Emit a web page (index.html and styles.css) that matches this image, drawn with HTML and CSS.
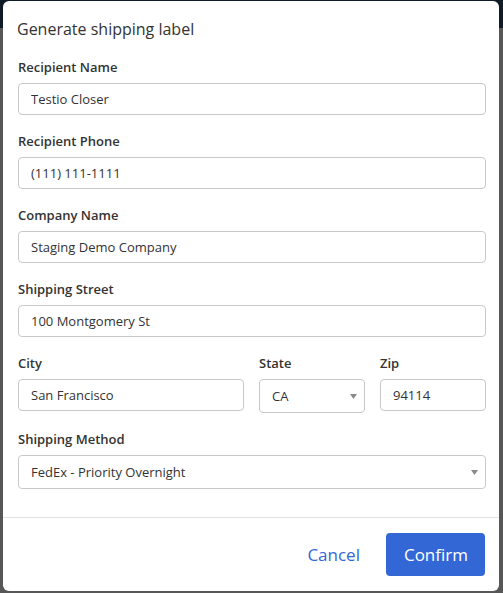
FILE: index.html
```html
<!DOCTYPE html>
<html lang="en">
<head>
<meta charset="utf-8">
<title>Generate shipping label</title>
<link rel="stylesheet" href="styles.css">
</head>
<body>
<div class="modal">
  <div class="modal-body">
    <h1 class="modal-title">Generate shipping label</h1>
    <div class="field">
      <label class="label">Recipient Name</label>
      <input class="input" type="text" value="Testio Closer">
    </div>
    <div class="field">
      <label class="label">Recipient Phone</label>
      <input class="input" type="text" value="(111) 111-1111">
    </div>
    <div class="field">
      <label class="label">Company Name</label>
      <input class="input" type="text" value="Staging Demo Company">
    </div>
    <div class="field">
      <label class="label">Shipping Street</label>
      <input class="input" type="text" value="100 Montgomery St">
    </div>
    <div class="field-row">
      <div class="field">
        <label class="label">City</label>
        <input class="input" type="text" value="San Francisco">
      </div>
      <div class="field">
        <label class="label">State</label>
        <div class="select-wrap">
          <select class="select"><option>CA</option></select>
          <svg class="caret" width="7" height="5" viewBox="0 0 7 5"><path d="M0 0h7L3.5 5z" fill="#8a8a8a"/></svg>
        </div>
      </div>
      <div class="field">
        <label class="label">Zip</label>
        <input class="input" type="text" value="94114">
      </div>
    </div>
    <div class="field">
      <label class="label">Shipping Method</label>
      <div class="select-wrap">
        <select class="select"><option>FedEx - Priority Overnight</option></select>
        <svg class="caret" width="7" height="5" viewBox="0 0 7 5"><path d="M0 0h7L3.5 5z" fill="#8a8a8a"/></svg>
      </div>
    </div>
  </div>
  <div class="modal-footer">
    <button class="btn-link" type="button">Cancel</button>
    <button class="btn-primary" type="button">Confirm</button>
  </div>
</div>
</body>
</html>
```
FILE: styles.css
```css
html, body {
  margin: 0;
  padding: 0;
}
body {
  background: linear-gradient(#0f1b27 0, #0f1b27 28px, #575757 28px);
  min-height: 593px;
  font-family: "Open Sans", "Liberation Sans", sans-serif;
  color: #333;
  overflow: hidden;
}
.modal {
  margin: 1px 0 0 3px;
  width: 496px;
  background: #fff;
  border-radius: 6px;
  display: flex;
  flex-direction: column;
}
.modal-body {
  padding: 16px 13px 28px 14px;
  display: flex;
  flex-direction: column;
}
.modal-title {
  margin: 0 0 17px;
  font-size: 16px;
  line-height: 24px;
  font-weight: 400;
  color: #333;
}
.field {
  display: flex;
  flex-direction: column;
  margin-bottom: 17px;
}
.modal-body > .field {
  margin-left: 1px;
}
.modal-body > .field:last-child {
  margin-bottom: 0;
}
.field-row {
  display: grid;
  grid-template-columns: 1fr 106px 106px;
  column-gap: 15px;
  align-items: start;
  margin-left: 1px;
}
.label {
  font-size: 13px;
  line-height: 18px;
  font-weight: 600;
  color: #333;
  margin-bottom: 7px;
}
.input, .select {
  box-sizing: border-box;
  width: 100%;
  height: 32px;
  margin: 0;
  padding: 0 12px;
  border: 1px solid #c9c9c9;
  border-radius: 4px;
  background: #fff;
  font-family: "Open Sans", "Liberation Sans", sans-serif;
  font-size: 13px;
  color: #333;
  outline: none;
}
.select {
  height: 34px;
  -webkit-appearance: none;
  appearance: none;
}
.select-wrap {
  position: relative;
}
.caret {
  position: absolute;
  right: 8px;
  top: 15px;
  pointer-events: none;
}
.modal-footer {
  border-top: 1px solid #e3e3e3;
  padding: 15px 14px 15px 15px;
  display: flex;
  justify-content: flex-end;
  align-items: center;
  gap: 9px;
}
.btn-link, .btn-primary {
  height: 43px;
  font-family: "Open Sans", "Liberation Sans", sans-serif;
  font-size: 17px;
  border: 0;
  cursor: pointer;
}
.btn-link {
  background: none;
  color: #3367d6;
  padding: 0 17px;
}
.btn-primary {
  background: #3367d6;
  color: #fff;
  border-radius: 4px;
  padding: 0 17px 0 18px;
}
```
